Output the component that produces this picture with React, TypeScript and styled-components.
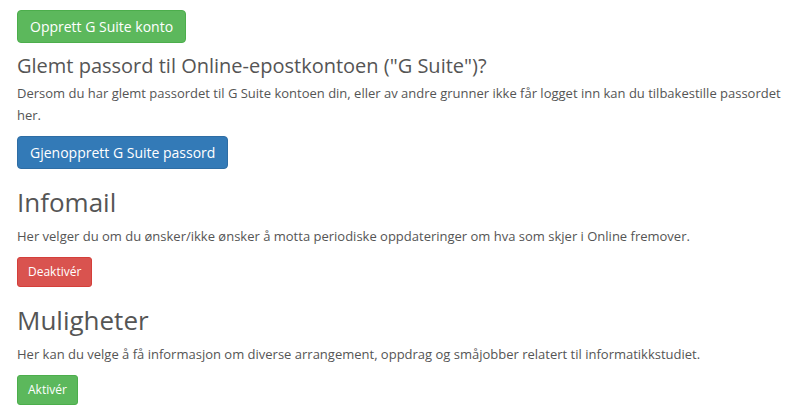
import React from "react";
import styled, { createGlobalStyle } from "styled-components";

const Global = createGlobalStyle`
  html, body { margin: 0; padding: 0; background: #fff; }
  body {
    font-family: "Open Sans", "Helvetica Neue", Arial, sans-serif;
    font-size: 14px;
    line-height: 1.42857;
    color: #555;
  }
  * { box-sizing: border-box; }
`;

const Page = styled.div`
  padding: 10px 17px 0 17px;
`;

const Section = styled.section`
  display: flex;
  flex-direction: column;
  align-items: flex-start;
`;

const variants = {
  success: { bg: "#5cb85c", border: "#4cae4c" },
  primary: { bg: "#337ab7", border: "#2e6da4" },
  danger: { bg: "#d9534f", border: "#d43f3a" },
};

const Button = styled.button<{ $variant: keyof typeof variants; $small?: boolean }>`
  display: inline-block;
  font-family: inherit;
  font-weight: 400;
  color: #fff;
  background: ${(p) => variants[p.$variant].bg};
  border: 1px solid ${(p) => variants[p.$variant].border};
  border-radius: ${(p) => (p.$small ? "3px" : "4px")};
  padding: ${(p) => (p.$small ? "5px 10px" : "6px 12px")};
  font-size: ${(p) => (p.$small ? "12px" : "14px")};
  line-height: ${(p) => (p.$small ? "18px" : "19px")};
  cursor: pointer;
  white-space: nowrap;
`;

const SubTitle = styled.h3`
  font-size: 20px;
  font-weight: 400;
  line-height: 22px;
  margin: 12px 0 5px 0;
  color: #555;
`;

const Title = styled.h2`
  font-size: 26px;
  font-weight: 400;
  line-height: 28px;
  margin: 19px 0 9px 0;
  color: #555;
`;

const Text = styled.p`
  font-size: 13px;
  line-height: 22px;
  margin: 0 0 10px 0;
`;

export default function App() {
  return (
    <>
      <Global />
      <Page>
        <Section>
          <Button $variant="success">Opprett G Suite konto</Button>
          <SubTitle>Glemt passord til Online-epostkontoen ("G Suite")?</SubTitle>
          <Text>
            Dersom du har glemt passordet til G Suite kontoen din, eller av andre grunner ikke får logget inn kan du
            tilbakestille passordet her.
          </Text>
          <Button $variant="primary">Gjenopprett G Suite passord</Button>
        </Section>
        <Section>
          <Title>Infomail</Title>
          <Text>Her velger du om du ønsker/ikke ønsker å motta periodiske oppdateringer om hva som skjer i Online fremover.</Text>
          <Button $variant="danger" $small>
            Deaktivér
          </Button>
        </Section>
        <Section>
          <Title>Muligheter</Title>
          <Text>Her kan du velge å få informasjon om diverse arrangement, oppdrag og småjobber relatert til informatikkstudiet.</Text>
          <Button $variant="success" $small>
            Aktivér
          </Button>
        </Section>
      </Page>
    </>
  );
}
